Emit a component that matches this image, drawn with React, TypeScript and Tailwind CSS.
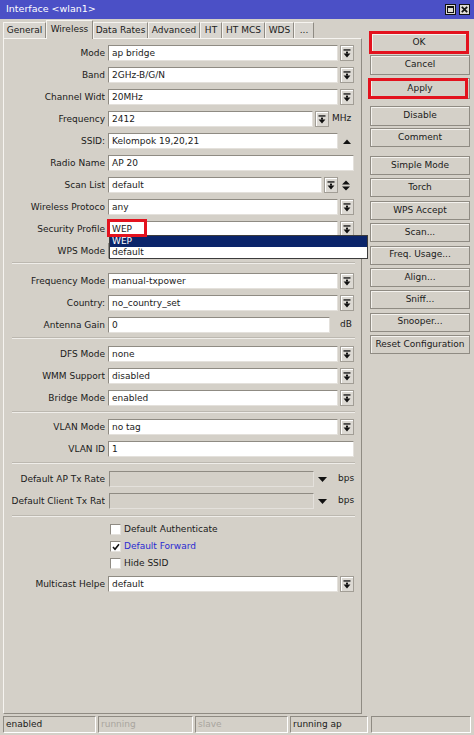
import React from "react";

// winbox style "Interface <wlan1>" window, wireless tab

function BarArrow() {
  return (
    <svg width="8" height="9" viewBox="0 0 8 9" aria-hidden>
      <rect x="0.5" y="0.3" width="7" height="1.3" fill="#111" />
      <rect x="3" y="2.6" width="2" height="2" fill="#111" />
      <path d="M0.6 4.5 H7.4 L4 8.6 Z" fill="#111" />
    </svg>
  );
}

function DropBtn() {
  return (
    <div className="ml-[2px] flex h-[16px] w-[14px] shrink-0 items-center justify-center border border-[#a29e96] bg-[#dcd9d3] shadow-[inset_1px_1px_0_#ffffff]">
      <BarArrow />
    </div>
  );
}

function Field({ value = "", className = "", grey = false }: { value?: string; className?: string; grey?: boolean }) {
  return (
    <div
      className={`h-[16px] shrink-0 overflow-hidden whitespace-nowrap border border-t-[#8f8b83] border-l-[#8f8b83] border-r-[#e4e1dc] border-b-[#e4e1dc] px-[3px] leading-[14px] ${grey ? "bg-[#d4d0c8]" : "bg-white"} ${className}`}
    >
      {value}
    </div>
  );
}

function Row({ label, children, className = "" }: { label: string; children?: React.ReactNode; className?: string }) {
  return (
    <div className={`relative flex h-[16px] items-center ${className}`}>
      <div className="w-[101px] shrink-0 overflow-hidden whitespace-nowrap text-right leading-[16px]">{label}</div>
      <div className="ml-[3px] flex h-full items-center">{children}</div>
    </div>
  );
}

function Sep({ className = "" }: { className?: string }) {
  return <div className={`ml-[8px] mr-[6px] h-[2px] border-t border-b border-t-[#bcb8b0] border-b-[#efede9] ${className}`} />;
}

function Check({ label, checked = false, blue = false }: { label: string; checked?: boolean; blue?: boolean }) {
  return (
    <div className="flex h-[17px] items-center pl-[106px]">
      <div className="flex h-[11px] w-[11px] items-center justify-center border border-t-[#8f8b83] border-l-[#8f8b83] border-r-[#e4e1dc] border-b-[#e4e1dc] bg-white">
        {checked && (
          <svg width="8" height="8" viewBox="0 0 8 8" aria-hidden>
            <path d="M1 4 L3 6.2 L7 1.2" fill="none" stroke="#111" strokeWidth="1.6" />
          </svg>
        )}
      </div>
      <span className={`ml-[3px] ${blue ? "text-[#2a2ad2]" : ""}`}>{label}</span>
    </div>
  );
}

function Btn({ label, className = "" }: { label: string; className?: string }) {
  return (
    <div
      className={`flex h-[19px] w-[100px] items-center justify-center whitespace-nowrap border border-[#8f8b83] bg-[#d4d0c8] shadow-[inset_1px_1px_0_#f4f2ee] ${className}`}
    >
      {label}
    </div>
  );
}

const tabs = [
  { name: "General", w: "w-[43px]" },
  { name: "Wireless", w: "w-[47px]", active: true },
  { name: "Data Rates", w: "w-[55px]" },
  { name: "Advanced", w: "w-[52px]" },
  { name: "HT", w: "w-[22px]" },
  { name: "HT MCS", w: "w-[43px]" },
  { name: "WDS", w: "w-[29px]" },
  { name: "...", w: "w-[20px]" },
];

export default function App() {
  return (
    <div className="flex h-[735px] w-[474px] flex-col overflow-hidden bg-[#d4d0c8] font-['DejaVu_Sans',sans-serif] text-[9px] text-[#1a1a1a]">
      {/* title bar */}
      <div className="flex h-[19px] shrink-0 items-center bg-[#4b50c6] pl-[6px] pr-[4px] text-[9.5px] text-white">
        <span className="flex-1">Interface &lt;wlan1&gt;</span>
        <div className="flex h-[11px] w-[11px] items-center justify-center border border-[#111] bg-[#dedbd5]">
          <svg width="7" height="7" viewBox="0 0 7 7" aria-hidden>
            <rect x="0.5" y="0.5" width="6" height="6" fill="none" stroke="#111" strokeWidth="1" />
            <rect x="0.5" y="0.5" width="6" height="1.5" fill="#111" />
          </svg>
        </div>
        <div className="ml-[3px] flex h-[11px] w-[11px] items-center justify-center border border-[#111] bg-[#dedbd5]">
          <svg width="7" height="7" viewBox="0 0 7 7" aria-hidden>
            <path d="M0.8 0.8 L6.2 6.2 M6.2 0.8 L0.8 6.2" stroke="#111" strokeWidth="1.7" />
          </svg>
        </div>
      </div>

      <div className="flex min-h-0 flex-1">
        {/* left: tabs and panel */}
        <div className="ml-[3px] flex w-[359px] flex-col">
          <div className="flex h-[19px] shrink-0 items-end">
            {tabs.map((t) => (
              <div
                key={t.name}
                className={`${t.w} relative flex items-center justify-center overflow-hidden whitespace-nowrap border-t border-l border-r border-t-[#f6f4f0] border-l-[#f6f4f0] border-r-[#8f8b83] ${
                  t.active ? "z-10 -mb-px h-[19px] bg-[#d4d0c8]" : "h-[16px] bg-[#d8d5cf]"
                }`}
              >
                {t.name}
              </div>
            ))}
          </div>

          <div className="flex flex-1 flex-col border border-t-[#f6f4f0] border-l-[#f6f4f0] border-r-[#8f8b83] border-b-[#8f8b83] pt-[6px]">
            <div className="flex flex-col gap-[6px]">
              <Row label="Mode">
                <Field value="ap bridge" className="w-[230px]" />
                <DropBtn />
              </Row>
              <Row label="Band">
                <Field value="2GHz-B/G/N" className="w-[230px]" />
                <DropBtn />
              </Row>
              <Row label="Channel Widt">
                <Field value="20MHz" className="w-[230px]" />
                <DropBtn />
              </Row>
              <Row label="Frequency">
                <Field value="2412" className="w-[205px]" />
                <DropBtn />
                <span className="ml-[3px] whitespace-nowrap">MHz</span>
              </Row>
              <Row label="SSID:">
                <Field value="Kelompok 19,20,21" className="w-[230px]" />
                <div className="flex w-[17px] justify-center">
                  <svg width="8" height="5" viewBox="0 0 8 5" aria-hidden>
                    <path d="M0 5 H8 L4 0.5 Z" fill="#111" />
                  </svg>
                </div>
              </Row>
              <Row label="Radio Name">
                <Field value="AP 20" className="w-[246px]" />
              </Row>
              <Row label="Scan List">
                <Field value="default" className="w-[214px]" />
                <DropBtn />
                <div className="flex w-[16px] justify-center">
                  <svg width="8" height="11" viewBox="0 0 8 11" aria-hidden>
                    <path d="M0 4.5 H8 L4 0.5 Z M0 6.5 H8 L4 10.5 Z" fill="#111" />
                  </svg>
                </div>
              </Row>
              <Row label="Wireless Protoco">
                <Field value="any" className="w-[230px]" />
                <DropBtn />
              </Row>
              <Row label="Security Profile" className="z-20">
                <Field value="WEP" className="w-[230px]" />
                <DropBtn />
                {/* open dropdown list */}
                <div className="absolute left-[105px] top-[14px] w-[259px] border border-[#3c3c3c] bg-white">
                  <div className="h-[11px] bg-[#0a246a] pl-[2px] leading-[11px] text-white">WEP</div>
                  <div className="h-[11px] pl-[2px] leading-[11px]">default</div>
                </div>
                {/* red annotation */}
                <div className="absolute left-[103px] top-[-2px] h-[18px] w-[40px] border-[3px] border-[#e3121e]" />
              </Row>
              <Row label="WPS Mode">
                <Field value="" className="w-[230px]" />
                <DropBtn />
              </Row>
            </div>

            <Sep className="mt-[3px] mb-[9px]" />

            <div className="flex flex-col gap-[6px]">
              <Row label="Frequency Mode">
                <Field value="manual-txpower" className="w-[230px]" />
                <DropBtn />
              </Row>
              <Row label="Country:">
                <Field value="no_country_set" className="w-[230px]" />
                <DropBtn />
              </Row>
              <Row label="Antenna Gain">
                <Field value="0" className="w-[222px]" />
                <span className="ml-[10px]">dB</span>
              </Row>
            </div>

            <Sep className="mt-[4px] mb-[7px]" />

            <div className="flex flex-col gap-[6px]">
              <Row label="DFS Mode">
                <Field value="none" className="w-[230px]" />
                <DropBtn />
              </Row>
              <Row label="WMM Support">
                <Field value="disabled" className="w-[230px]" />
                <DropBtn />
              </Row>
              <Row label="Bridge Mode">
                <Field value="enabled" className="w-[230px]" />
                <DropBtn />
              </Row>
            </div>

            <Sep className="mt-[5px] mb-[6px]" />

            <div className="flex flex-col gap-[6px]">
              <Row label="VLAN Mode">
                <Field value="no tag" className="w-[230px]" />
                <DropBtn />
              </Row>
              <Row label="VLAN ID">
                <Field value="1" className="w-[246px]" />
              </Row>
            </div>

            <Sep className="mt-[5px] mb-[7px]" />

            <div className="flex flex-col gap-[6px]">
              <Row label="Default AP Tx Rate">
                <Field grey className="ml-[1px] w-[205px]" />
                <div className="flex w-[17px] justify-center">
                  <svg width="9" height="5" viewBox="0 0 9 5" aria-hidden>
                    <path d="M0 0 H9 L4.5 5 Z" fill="#111" />
                  </svg>
                </div>
                <span className="ml-[7px]">bps</span>
              </Row>
              <Row label="Default Client Tx Rat">
                <Field grey className="ml-[1px] w-[205px]" />
                <div className="flex w-[17px] justify-center">
                  <svg width="9" height="5" viewBox="0 0 9 5" aria-hidden>
                    <path d="M0 0 H9 L4.5 5 Z" fill="#111" />
                  </svg>
                </div>
                <span className="ml-[7px]">bps</span>
              </Row>
            </div>

            <Sep className="mt-[6px] mb-[4px]" />

            <div className="flex flex-col">
              <Check label="Default Authenticate" />
              <Check label="Default Forward" checked blue />
              <Check label="Hide SSID" />
            </div>

            <Row label="Multicast Helpe" className="mt-[4px]">
              <Field value="default" className="w-[230px]" />
              <DropBtn />
            </Row>
          </div>
        </div>

        {/* right: buttons */}
        <div className="ml-[8px] flex w-[100px] flex-col">
          <Btn label="OK" className="-ml-px mt-[12px] h-[23px] border-[3px] border-[#e3121e]" />
          <Btn label="Cancel" className="mt-[1px] h-[20px]" />
          <div className="relative mt-[3px] h-[21px]">
            <Btn label="Apply" className="h-[21px]" />
            <div className="absolute left-[-2px] right-[2px] top-0 bottom-0 border-[3px] border-[#e3121e]" />
          </div>
          <Btn label="Disable" className="mt-[7px] h-[20px]" />
          <Btn label="Comment" className="mt-[2px]" />
          <div className="mt-[9px] flex flex-col gap-[3.4px]">
            <Btn label="Simple Mode" />
            <Btn label="Torch" />
            <Btn label="WPS Accept" />
            <Btn label="Scan..." />
            <Btn label="Freq. Usage..." />
            <Btn label="Align..." />
            <Btn label="Sniff..." />
            <Btn label="Snooper..." />
            <Btn label="Reset Configuration" />
          </div>
        </div>
      </div>

      {/* status bar */}
      <div className="flex h-[21px] shrink-0 items-start pl-[3px] pt-[2px]">
        <div className="h-[17px] w-[93px] border border-t-[#8f8b83] border-l-[#8f8b83] border-r-white border-b-white pl-[2px] leading-[15px]">enabled</div>
        <div className="ml-[2px] h-[17px] w-[95px] border border-t-[#8f8b83] border-l-[#8f8b83] border-r-white border-b-white pl-[2px] leading-[15px] text-[#a9a59e]">running</div>
        <div className="ml-[2px] h-[17px] w-[93px] border border-t-[#8f8b83] border-l-[#8f8b83] border-r-white border-b-white pl-[2px] leading-[15px] text-[#a9a59e]">slave</div>
        <div className="ml-[2px] h-[17px] w-[78px] border border-t-[#8f8b83] border-l-[#8f8b83] border-r-white border-b-white pl-[2px] leading-[15px]">running ap</div>
        <div className="ml-[3px] h-[17px] w-[100px] border border-t-[#8f8b83] border-l-[#8f8b83] border-r-white border-b-white" />
      </div>
    </div>
  );
}
